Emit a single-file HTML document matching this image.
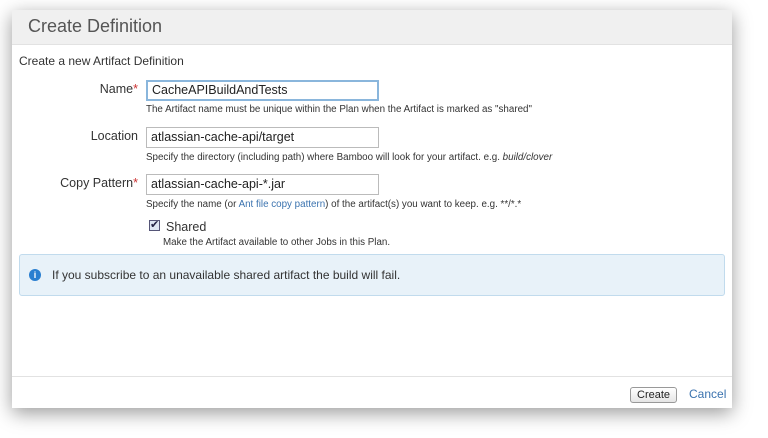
<!DOCTYPE html>
<html><head><style>
body{margin:0;width:768px;height:438px;background:#fff;font-family:"Liberation Sans",sans-serif;position:relative;overflow:hidden}
.dlg{position:absolute;left:12px;top:10px;width:720px;height:398px;background:#fff;box-shadow:0 5px 18px rgba(0,0,0,.4)}
.hd{height:34px;background:#f0f0f0;border-bottom:1px solid #e2e2e2}
.hd span{position:absolute;left:16px;top:6px;font-size:18px;color:#555}
.t{position:absolute;font-size:12px;color:#333}
.lbl{position:absolute;font-size:12.5px;color:#333;text-align:right;width:126px;left:0}
.lbl b{color:#c33;font-weight:normal}
.in{position:absolute;left:134px;width:233px;border:1px solid #bbb;font-size:12.5px;color:#222;padding-left:4px;line-height:19px;box-sizing:border-box;height:21px}
.d{position:absolute;left:134px;font-size:9.8px;color:#333}
a{color:#3b73af;text-decoration:none}
.info{position:absolute;left:7px;top:244px;width:706px;height:42px;background:#e8f2f9;border:1px solid #c1dbed;border-radius:3px;box-sizing:border-box}
.ft{position:absolute;left:0;top:366px;width:720px;height:32px;border-top:1px solid #e2e2e2}
.btn{position:absolute;left:618px;top:10px;font-size:11px;border:1px solid #999;border-radius:3px;padding:1px 6px;background:linear-gradient(#fff,#e5e5e5);color:#222}
</style></head><body>
<div class="dlg">
<div class="hd"><span>Create Definition</span></div>
<div class="t" style="left:7px;top:44px">Create a new Artifact Definition</div>
<div class="lbl" style="top:72px">Name<b>*</b></div>
<div class="in" style="top:70px;border:2px solid #8ab6dc;line-height:17px">CacheAPIBuildAndTests</div>
<div class="d" style="top:94px">The Artifact name must be unique within the Plan when the Artifact is marked as "shared"</div>
<div class="lbl" style="top:119px">Location</div>
<div class="in" style="top:117px">atlassian-cache-api/target</div>
<div class="d" style="top:142px">Specify the directory (including path) where Bamboo will look for your artifact. e.g. <i>build/clover</i></div>
<div class="lbl" style="top:166px">Copy Pattern<b>*</b></div>
<div class="in" style="top:164px">atlassian-cache-api-*.jar</div>
<div class="d" style="top:189px">Specify the name (or <a>Ant file copy pattern</a>) of the artifact(s) you want to keep. e.g. **/*.*</div>
<div style="position:absolute;left:137px;top:210px;width:9px;height:9px;border:1px solid #557;background:#dde6f3;font-size:11px;line-height:8px;color:#224">✔</div>
<div class="t" style="left:154px;top:210px;font-size:12.5px">Shared</div>
<div class="d" style="left:151px;top:227px">Make the Artifact available to other Jobs in this Plan.</div>
<div class="info">
<div style="position:absolute;left:9px;top:14px;width:12px;height:12px;border-radius:50%;background:#2a7fd0;color:#fff;font-size:9px;font-weight:bold;text-align:center;line-height:12px">i</div>
<div class="t" style="left:32px;top:13px;font-size:12px">If you subscribe to an unavailable shared artifact the build will fail.</div>
</div>
<div class="ft"><span class="btn">Create</span><a style="position:absolute;left:677px;top:10px;font-size:12px">Cancel</a></div>
</div>
</body></html>
